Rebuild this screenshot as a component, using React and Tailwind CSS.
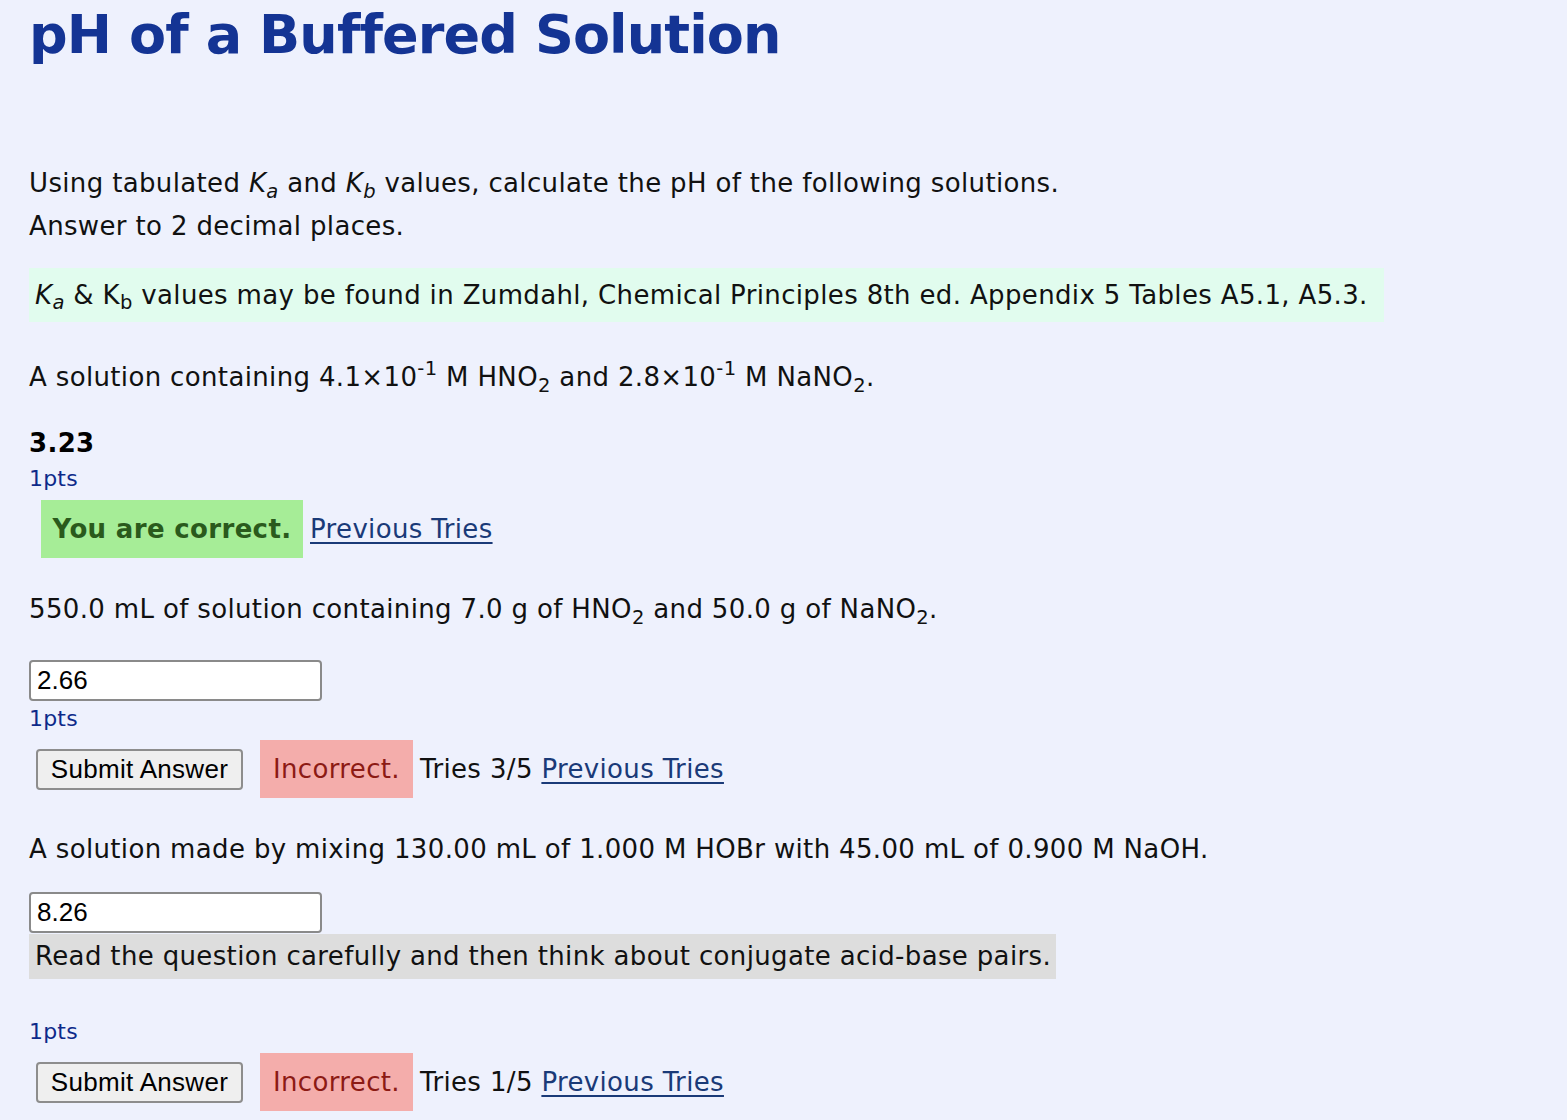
export default function App() {
  const body = { fontFamily: '"DejaVu Sans", Verdana, sans-serif' };
  const Sub = ({ children, i }) => (
    <sub className={`text-[0.75em] relative top-[0.3em] align-baseline ${i ? "italic" : ""}`}>{children}</sub>
  );
  const Sup = ({ children }) => (
    <sup className="text-[0.75em] relative -top-[0.55em] align-baseline">{children}</sup>
  );
  const Pts = ({ cls }) => (
    <div className={`text-[22px] leading-[24px] tracking-[0.2px] text-[#0d2a8a] ${cls}`}>1pts</div>
  );
  const Link = ({ children }) => (
    <a href="#" className="text-[#1a3a78] underline underline-offset-[4px] decoration-[2px]">{children}</a>
  );
  const Input = ({ value, cls }) => (
    <div className={`w-[293px] h-[41px] bg-white border-[2px] border-[#8a8a8a] rounded-[4px] flex items-center pl-[6px] text-[26px] text-black tracking-normal ${cls}`} style={{ fontFamily: '"Liberation Sans", Arial, sans-serif' }}>
      {value}
    </div>
  );
  const Btn = () => (
    <div className="h-[41px] w-[207px] ml-[7px] bg-[#efefef] border-[2px] border-[#8d8d8d] rounded-[4px] flex items-center justify-center text-[26px] tracking-[0.3px] text-black" style={{ fontFamily: '"Liberation Sans", Arial, sans-serif' }}>
      Submit Answer
    </div>
  );
  return (
    <div className="min-h-[1120px] bg-[#eef1fd] text-[26px] tracking-[0.35px] text-[#111] pl-[29px] overflow-hidden" style={body}>
      <h1 className="text-[54px] font-bold text-[#143494] leading-[70px] pt-0 tracking-[-0.9px]">pH of a Buffered Solution</h1>
      <div className="mt-[92px] leading-[43px]">
        <div>Using tabulated <i>K<Sub i>a</Sub></i> and <i>K<Sub i>b</Sub></i> values, calculate the pH of the following solutions.</div>
        <div>Answer to 2 decimal places.</div>
      </div>
      <div className="mt-[20px] w-[1355px] bg-[#e1fcee] h-[54px] flex items-center pl-[6px]">
        <span><i>K<Sub i>a</Sub></i> &amp; K<Sub>b</Sub> values may be found in Zumdahl, Chemical Principles 8th ed. Appendix 5 Tables A5.1, A5.3.</span>
      </div>
      <div className="mt-[34px] leading-[43px]">
        A solution containing 4.1×10<Sup>-1</Sup> M HNO<Sub>2</Sub> and 2.8×10<Sup>-1</Sup> M NaNO<Sub>2</Sub>.
      </div>
      <div className="mt-[29px] font-bold text-black leading-[30px]">3.23</div>
      <Pts cls="mt-[9px]" />
      <div className="mt-[9px] flex items-center">
        <div className="ml-[12px] h-[58px] w-[262px] bg-[#a6ed97] flex items-center justify-center font-bold text-[#2a5a1c]">You are correct.</div>
        <div className="ml-[7px]"><Link>Previous Tries</Link></div>
      </div>
      <div className="mt-[30px] leading-[43px]">
        550.0 mL of solution containing 7.0 g of HNO<Sub>2</Sub> and 50.0 g of NaNO<Sub>2</Sub>.
      </div>
      <Input value="2.66" cls="mt-[29px]" />
      <Pts cls="mt-[6px]" />
      <div className="mt-[9px] flex items-center">
        <Btn />
        <div className="ml-[17px] h-[58px] w-[153px] bg-[#f4adab] flex items-center justify-center text-[#8c1a14]">Incorrect.</div>
        <div className="ml-[7px]">Tries 3/5 <Link>Previous Tries</Link></div>
      </div>
      <div className="mt-[30px] leading-[43px]">
        A solution made by mixing 130.00 mL of 1.000 M HOBr with 45.00 mL of 0.900 M NaOH.
      </div>
      <Input value="8.26" cls="mt-[21px]" />
      <div className="mt-[1px] w-[1027px] h-[45px] bg-[#dddddd] flex items-center pl-[6px]">Read the question carefully and then think about conjugate acid-base pairs.</div>
      <Pts cls="mt-[41px]" />
      <div className="mt-[9px] flex items-center">
        <Btn />
        <div className="ml-[17px] h-[58px] w-[153px] bg-[#f4adab] flex items-center justify-center text-[#8c1a14]">Incorrect.</div>
        <div className="ml-[7px]">Tries 1/5 <Link>Previous Tries</Link></div>
      </div>
    </div>
  );
}
